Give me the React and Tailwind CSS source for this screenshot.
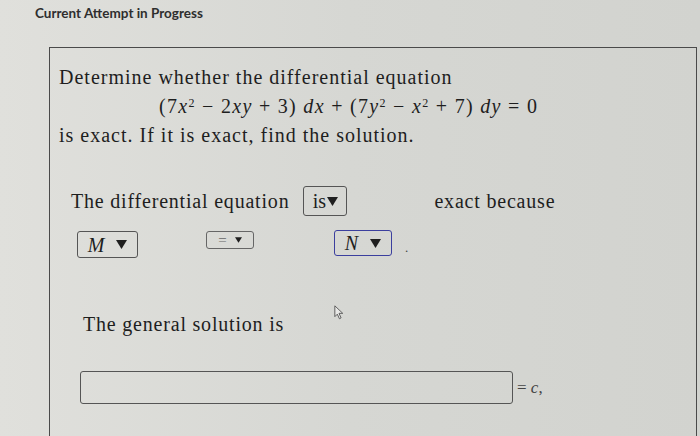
import React from 'react';

const serif = { fontFamily: '"Liberation Serif", "DejaVu Serif", serif' };

const Caret = ({ small }) => (
  <svg viewBox="0 0 10 8" className={small ? 'w-[7px] h-[6px]' : 'w-[11px] h-[9px]'}>
    <path d="M0 0 L10 0 L5 8 Z" fill="#1f1f1f" />
  </svg>
);

const Select = ({ children, className }) => (
  <div className={`flex items-center justify-center rounded-[3px] border ${className}`}>{children}</div>
);

const Pointer = () => (
  <svg viewBox="0 0 12 18" className="absolute left-[334px] top-[305px] w-[10px] h-[15px]">
    <path d="M1 1 L1 14 L4 11 L6.5 16.5 L8.5 15.5 L6 10 L10.5 10 Z" fill="#e8e8e6" stroke="#555" strokeWidth="1.1" strokeLinejoin="round" />
  </svg>
);

export default function App() {
  return (
    <div className="relative w-[700px] h-[436px] overflow-hidden bg-gradient-to-r from-[#e0e0dc] via-[#d6d7d3] to-[#d2d3cf] text-[#1e1e1e]">
      <div className="h-[47px] pl-[35px] pt-[3px] text-[13.5px] font-bold text-[#2e2e2e]" style={{ fontFamily: 'Lato, "Open Sans", sans-serif' }}>
        Current Attempt in Progress
      </div>

      <div className="ml-[49px] mr-[3px] h-[400px] border-l border-t border-r border-[#4a4a4a]" style={serif}>
        <div className="pl-[9px] pt-[15px] text-[20px] leading-[29px] tracking-[1px]">
          <div>Determine whether the differential equation</div>
          <div className="pl-[100px] tracking-[1.3px]">
            (7<i>x</i><sup className="text-[12px]">2</sup> − 2<i>xy</i> + 3) <i>dx</i> + (7<i>y</i><sup className="text-[12px]">2</sup> − <i>x</i><sup className="text-[12px]">2</sup> + 7) <i>dy</i> = 0
          </div>
          <div>is exact. If it is exact, find the solution.</div>
        </div>

        <div className="mt-[36px] pl-[21px] flex items-center text-[20px] tracking-[0.8px] h-[30px]">
          <span>The differential equation</span>
          <Select className="ml-[14px] w-[44px] h-[30px] border-[#555] gap-[1px] tracking-normal">
            <span className="leading-none">is</span>
            <Caret />
          </Select>
          <span className="ml-[87px]">exact because</span>
        </div>

        <div className="mt-[15px] pl-[27px] flex items-start">
          <Select className="w-[61px] h-[27px] border-[#555] gap-[12px] text-[20px]">
            <i>M</i>
            <Caret />
          </Select>
          <Select className="ml-[68px] w-[48px] h-[18px] border-[#666] gap-[8px] text-[15px] text-[#666]">
            <span className="leading-none">=</span>
            <Caret small />
          </Select>
          <Select className="ml-[80px] -mt-[1px] w-[58px] h-[26px] border-[#3b3f9e] gap-[12px] text-[20px]">
            <i>N</i>
            <Caret />
          </Select>
          <span className="ml-[13px] mt-[7px] text-[13px] text-[#444]">.</span>
        </div>

        <div className="mt-[51px] pl-[33px] text-[20px] tracking-[0.8px]">The general solution is</div>

        <div className="mt-[32px] pl-[30px] flex items-center">
          <div className="w-[433px] h-[33px] rounded-[3px] border border-[#555]" />
          <span className="ml-[4px] text-[17px] text-[#444]">= <i>c</i>,</span>
        </div>
      </div>

      <Pointer />
    </div>
  );
}
